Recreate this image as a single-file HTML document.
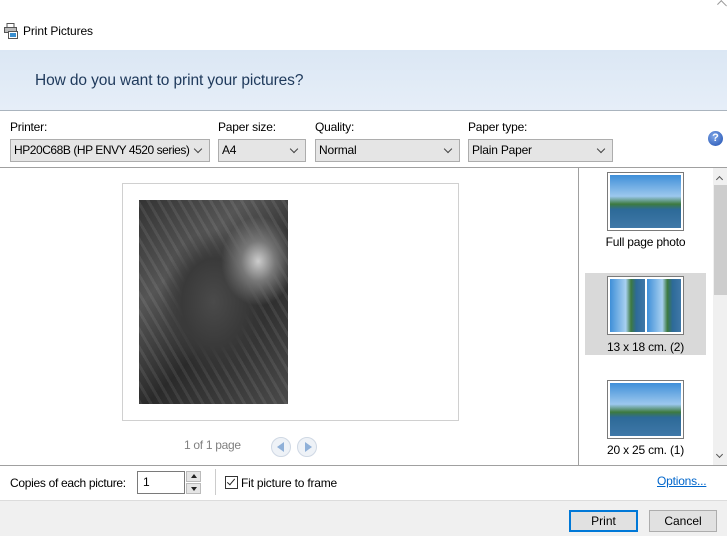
<!DOCTYPE html>
<html><head><style>
*{box-sizing:border-box;margin:0;padding:0}
body{width:727px;height:536px;position:relative;overflow:hidden;background:#fff;font-family:"Liberation Sans",sans-serif;font-size:12px;color:#000}
.a{position:absolute}
.sel{position:absolute;top:139px;height:23px;background:#e5e5e5;border:1px solid #adadad;font-size:12px;letter-spacing:-0.2px;line-height:21px;padding-left:3px;white-space:nowrap;overflow:hidden}
.sel:after{content:"";position:absolute;right:8px;top:6px;width:5px;height:5px;border-right:1px solid #444;border-bottom:1px solid #444;transform:rotate(45deg)}
.lbl{position:absolute;top:120px;font-size:12px;letter-spacing:-0.2px}
.th{position:absolute;border:1px solid #7a7a7a;background:#fff;padding:2px}
.sky{width:100%;height:100%;background:linear-gradient(180deg,#3f8fd8 0%,#9cc8ee 40%,#3d7a3f 55%,#2d6a98 65%,#3f78a8 100%)}
.sky2{background:linear-gradient(90deg,#3f8fd8 0%,#a8d0f0 45%,#3d7a3f 60%,#2d6a98 75%,#3f78a8 100%)}
.cap{position:absolute;width:121px;text-align:center;font-size:12px;letter-spacing:-0.2px}
.btn{position:absolute;top:510px;height:22px;background:#e1e1e1;border:1px solid #adadad;text-align:center;line-height:20px;font-size:12px}
</style></head><body>
<div class="a" style="left:718px;top:2px;width:8px;height:6px;border-left:1px solid #999;border-top:1px solid #999;transform:rotate(45deg)"></div>
<svg class="a" style="left:4px;top:23px" width="14" height="16" viewBox="0 0 14 16"><rect x="3" y="0.5" width="7" height="4" fill="#fff" stroke="#555"/><rect x="0.5" y="4.5" width="12" height="5" fill="#bbb" stroke="#555"/><rect x="4.5" y="8.5" width="9" height="7" fill="#fff" stroke="#555"/><rect x="6" y="10" width="6" height="4" fill="#3a8fd0"/></svg>
<div class="a" style="left:23px;top:24px;font-size:12px;letter-spacing:-0.1px">Print Pictures</div>
<div class="a" style="left:0;top:50px;width:727px;height:61px;background:linear-gradient(180deg,#dbe7f4,#e6eef8);border-bottom:1px solid #aab4be"></div>
<div class="a" style="left:35px;top:72px;font-size:15.5px;letter-spacing:-0.1px;color:#1e395b">How do you want to print your pictures?</div>
<div class="lbl" style="left:10px">Printer:</div>
<div class="lbl" style="left:218px">Paper size:</div>
<div class="lbl" style="left:315px">Quality:</div>
<div class="lbl" style="left:468px">Paper type:</div>
<div class="sel" style="left:10px;width:200px;letter-spacing:-0.45px">HP20C68B (HP ENVY 4520 series)</div>
<div class="sel" style="left:218px;width:88px">A4</div>
<div class="sel" style="left:315px;width:145px">Normal</div>
<div class="sel" style="left:468px;width:145px">Plain Paper</div>
<div class="a" style="left:708px;top:131px;width:15px;height:15px;border-radius:50%;background:radial-gradient(circle at 40% 35%,#7fa7e8,#1f4fb0);color:#fff;font-weight:bold;font-size:11px;text-align:center;line-height:15px">?</div>
<div class="a" style="left:0;top:167px;width:727px;height:1px;background:#a0a0a0"></div>
<div class="a" style="left:578px;top:168px;width:1px;height:297px;background:#a0a0a0"></div>
<div class="a" style="left:122px;top:183px;width:337px;height:238px;border:1px solid #d0d0d0"></div>
<div class="a" style="left:139px;top:200px;width:149px;height:204px;background:radial-gradient(ellipse at 80% 30%,#ccc 0%,#777 10%,transparent 22%),radial-gradient(ellipse at 50% 50%,#4a4a4a 0%,#3a3a3a 30%,transparent 50%),repeating-linear-gradient(60deg,rgba(255,255,255,.08) 0 3px,transparent 3px 9px),linear-gradient(135deg,#333,#555 30%,#2a2a2a 60%,#4a4a4a)"></div>
<div class="a" style="left:184px;top:438px;color:#808080;font-size:12px;letter-spacing:-0.3px">1 of 1 page</div>
<div class="a" style="left:271px;top:437px;width:20px;height:20px;border-radius:50%;border:1px solid #cfd8e4;background:#eef2f7"></div>
<div class="a" style="left:277px;top:442px;width:0;height:0;border-top:5px solid transparent;border-bottom:5px solid transparent;border-right:7px solid #8fb0d8"></div>
<div class="a" style="left:297px;top:437px;width:20px;height:20px;border-radius:50%;border:1px solid #cfd8e4;background:#eef2f7"></div>
<div class="a" style="left:305px;top:442px;width:0;height:0;border-top:5px solid transparent;border-bottom:5px solid transparent;border-left:7px solid #8fb0d8"></div>
<div class="th" style="left:607px;top:172px;width:77px;height:59px"><div class="sky"></div></div>
<div class="cap" style="left:585px;top:235px">Full page photo</div>
<div class="a" style="left:585px;top:273px;width:121px;height:82px;background:#d9d9d9"></div>
<div class="th" style="left:607px;top:276px;width:77px;height:59px;display:flex;gap:2px"><div class="sky sky2" style="flex:1"></div><div class="sky sky2" style="flex:1"></div></div>
<div class="cap" style="left:585px;top:340px">13 x 18 cm. (2)</div>
<div class="th" style="left:607px;top:380px;width:77px;height:59px"><div class="sky"></div></div>
<div class="cap" style="left:585px;top:443px">20 x 25 cm. (1)</div>
<div class="a" style="left:713px;top:168px;width:14px;height:297px;background:#f0f0f0"></div>
<div class="a" style="left:714px;top:185px;width:13px;height:110px;background:#cdcdcd"></div>
<div class="a" style="left:717px;top:177px;width:5px;height:5px;border-left:1px solid #555;border-top:1px solid #555;transform:rotate(45deg)"></div>
<div class="a" style="left:717px;top:452px;width:5px;height:5px;border-right:1px solid #555;border-bottom:1px solid #555;transform:rotate(45deg)"></div>
<div class="a" style="left:0;top:465px;width:727px;height:1px;background:#a0a0a0"></div>
<div class="a" style="left:10px;top:476px;font-size:12px;letter-spacing:-0.3px">Copies of each picture:</div>
<div class="a" style="left:137px;top:471px;width:48px;height:23px;border:1px solid #7a7a7a;padding:3px 5px;font-size:12px">1</div>
<div class="a" style="left:186px;top:471px;width:15px;height:11px;background:#e5e5e5;border:1px solid #bbb"></div>
<div class="a" style="left:186px;top:483px;width:15px;height:11px;background:#e5e5e5;border:1px solid #bbb"></div>
<div class="a" style="left:191px;top:474px;border-left:3px solid transparent;border-right:3px solid transparent;border-bottom:4px solid #222"></div>
<div class="a" style="left:191px;top:487px;border-left:3px solid transparent;border-right:3px solid transparent;border-top:4px solid #222"></div>
<div class="a" style="left:215px;top:469px;width:1px;height:26px;background:#ccc"></div>
<div class="a" style="left:225px;top:476px;width:13px;height:13px;border:1px solid #333;background:#fff"></div>
<div class="a" style="left:229px;top:477px;width:4px;height:8px;border-right:1.5px solid #222;border-bottom:1.5px solid #222;transform:rotate(40deg)"></div>
<div class="a" style="left:241px;top:476px;font-size:12px;letter-spacing:-0.2px">Fit picture to frame</div>
<div class="a" style="left:657px;top:474px;font-size:12px;letter-spacing:-0.2px;color:#0066cc;text-decoration:underline">Options...</div>
<div class="a" style="left:0;top:500px;width:727px;height:36px;background:#f0f0f0;border-top:1px solid #dcdcdc"></div>
<div class="btn" style="left:569px;width:69px;border:2px solid #0078d7;line-height:18px">Print</div>
<div class="btn" style="left:649px;width:68px">Cancel</div>
</body></html>
